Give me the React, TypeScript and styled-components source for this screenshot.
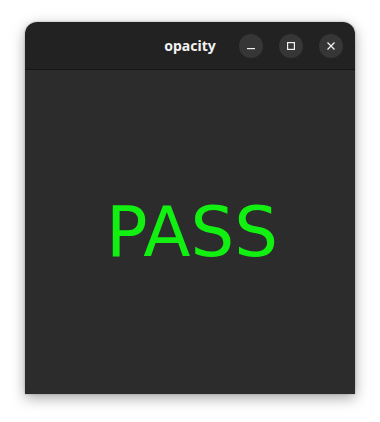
import * as React from 'react';
import styled, { createGlobalStyle } from 'styled-components';

const GlobalStyle = createGlobalStyle`
  html, body {
    margin: 0;
    padding: 0;
    background: #ffffff;
  }
`;

const Page = styled.div`
  width: 380px;
  height: 422px;
  box-sizing: border-box;
  padding: 22px 25px 0;
  display: flex;
  align-items: flex-start;
`;

const Window = styled.div`
  width: 330px;
  height: 372px;
  display: flex;
  flex-direction: column;
  border-radius: 12px 12px 0 0;
  overflow: hidden;
  box-shadow: 0 4px 14px rgba(0, 0, 0, 0.35), 0 0 2px rgba(0, 0, 0, 0.3);
`;

const TitleBar = styled.div`
  height: 47px;
  flex: none;
  background: #222222;
  border-bottom: 1px solid #161616;
  display: flex;
  align-items: center;
  position: relative;
  padding-right: 12px;
  justify-content: flex-end;
`;

const Title = styled.div`
  position: absolute;
  left: 0;
  right: 0;
  text-align: center;
  font-family: 'Noto Sans', 'DejaVu Sans', sans-serif;
  font-weight: 700;
  font-size: 14px;
  color: #f2f2f2;
  pointer-events: none;
`;

const Buttons = styled.div`
  display: flex;
  gap: 16px;
  position: relative;
`;

const WinButton = styled.div`
  width: 24px;
  height: 24px;
  border-radius: 50%;
  background: #363636;
  display: flex;
  align-items: center;
  justify-content: center;
`;

const Body = styled.div`
  flex: 1;
  background: #2c2c2c;
  display: flex;
  align-items: center;
  justify-content: center;
  padding-left: 4px;
`;

const Pass = styled.div`
  font-family: 'DejaVu Sans', sans-serif;
  font-size: 69px;
  color: #12f012;
`;

export default function App() {
  return (
    <>
      <GlobalStyle />
      <Page>
        <Window>
          <TitleBar>
            <Title>opacity</Title>
            <Buttons>
              <WinButton>
                <svg width="10" height="10" viewBox="0 0 10 10">
                  <rect x="1" y="7" width="8" height="1.2" fill="#f0f0f0" />
                </svg>
              </WinButton>
              <WinButton>
                <svg width="10" height="10" viewBox="0 0 10 10">
                  <rect x="1.6" y="1.6" width="6.8" height="6.8" fill="none" stroke="#f0f0f0" strokeWidth="1.2" />
                </svg>
              </WinButton>
              <WinButton>
                <svg width="10" height="10" viewBox="0 0 10 10">
                  <path d="M1.5 1.5 L8.5 8.5 M8.5 1.5 L1.5 8.5" stroke="#f0f0f0" strokeWidth="1.3" />
                </svg>
              </WinButton>
            </Buttons>
          </TitleBar>
          <Body>
            <Pass>PASS</Pass>
          </Body>
        </Window>
      </Page>
    </>
  );
}
